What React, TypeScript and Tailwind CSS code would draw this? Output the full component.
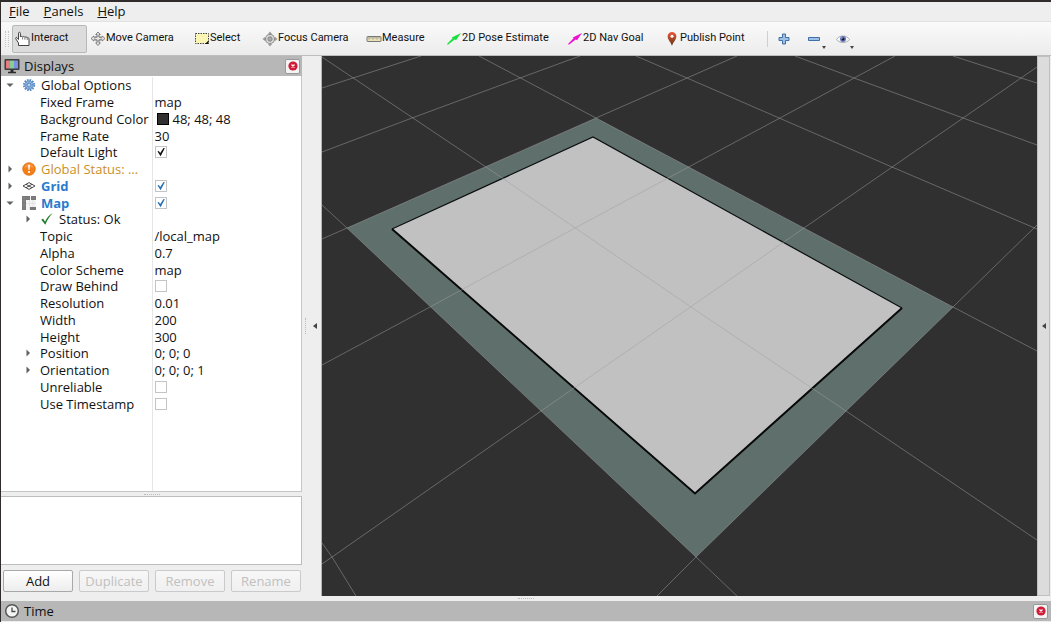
import type { ReactNode } from 'react';

type Row = {
  label: string;
  value?: string;
  checked?: boolean;
  arrow?: 'open' | 'closed';
  icon?: ReactNode;
  depth: 0 | 1;
  tone?: string;
  swatch?: boolean;
  blueCheck?: boolean;
};

function GearIcon() {
  return (
    <svg viewBox="0 0 14 14" className="w-3.5 h-3.5 shrink-0">
      <circle cx="7" cy="7" r="5.2" fill="none" stroke="#5c8dc6" strokeWidth="1.8" strokeDasharray="1.7 1.02" />
      <circle cx="7" cy="7" r="4.3" fill="#8db4e0" stroke="#4f81bd" strokeWidth="0.7" />
      <path d="M7 3v8M3 7h8M4.2 4.2l5.6 5.6M9.8 4.2L4.2 9.8" stroke="#4f81bd" strokeWidth="0.6" />
      <circle cx="7" cy="7" r="1.5" fill="#d7e5f5" stroke="#4f81bd" strokeWidth="0.6" />
    </svg>
  );
}

function WarningIcon() {
  return (
    <svg viewBox="0 0 14 14" className="w-3.5 h-3.5 shrink-0">
      <circle cx="7" cy="7" r="6.3" fill="#f57f17" stroke="#d96a0b" strokeWidth="0.7" />
      <path d="M2 5.5a5.3 5.3 0 0 1 10 0" fill="#fba55c" opacity="0.6" />
      <path d="M6.1 2.8h1.8l-.3 5H6.4z" fill="#fff" />
      <circle cx="7" cy="10" r="1.1" fill="#fff" />
    </svg>
  );
}

function GridIcon() {
  return (
    <svg viewBox="0 0 14 14" className="w-3.5 h-3.5 shrink-0">
      <path d="M1 7l6-3.4L13 7l-6 3.4zM4 5.3l6 3.4M10 5.3L4 8.7" fill="none" stroke="#4a4a4a" strokeWidth="1" />
    </svg>
  );
}

function MapIcon() {
  return (
    <svg viewBox="0 0 14 14" className="w-3.5 h-3.5 shrink-0">
      <path d="M4 4h10v7H8v3H4z" fill="#f4f4f4" />
      <path d="M0 0h8v4H4v10H0zM9 0h5v4H9zM8 11h6v3H8z" fill="#777" />
      <path d="M4 7.5h10M7.5 4v10M11 4v7" stroke="#dcdcdc" strokeWidth="0.6" />
      <path d="M2 0v14M0 2h14M0 5h4M0 9h4" stroke="#9a9a9a" strokeWidth="0.4" />
    </svg>
  );
}

function OkIcon() {
  return (
    <svg viewBox="0 0 14 14" className="w-3.5 h-3.5 shrink-0">
      <path d="M1.2 7.6l2-.9 1.8 3C6.8 6 9 3.200 12.600 1 9.500 4.600 7 8.400 5.300 12.800z" fill="#1f7a26" />
    </svg>
  );
}

function DisplaysIcon() {
  return (
    <svg viewBox="0 0 16 16" className="w-4 h-4 shrink-0">
      <rect x="0.500" y="1" width="15" height="11" rx="1" fill="#3d3d3d" />
      <path d="M2 2.500h4v8H2z" fill="#e47c80" />
      <path d="M6 2.500h4v8H6z" fill="#82d098" />
      <path d="M10 2.500h4v8h-4z" fill="#7c8fe0" />
      <path d="M6.500 12h3v1.800h2.500v1.400H4v-1.400h2.500z" fill="#2b2b2b" />
    </svg>
  );
}

function ClockIcon() {
  return (
    <svg viewBox="0 0 16 16" className="w-4 h-4 shrink-0">
      <circle cx="8" cy="8" r="6.300" fill="#f4f4f4" stroke="#565656" strokeWidth="1.500" />
      <path d="M8 4.500V8.500h3.500" fill="none" stroke="#4a4a4a" strokeWidth="1.300" />
    </svg>
  );
}

function HandIcon() {
  return (
    <svg viewBox="0 0 16 16" className="w-4 h-4 shrink-0">
      <path
        d="M3.500 14.500V12L.8 7.800c-.6-1.200.7-1.900 1.400-1L3.500 8.500V2.200c0-1.300 1.900-1.300 1.900 0V6c.4-.9 2-.9 2.200.1.500-.8 2.200-.7 2.300.3.500-.8 2.200-.6 2.300.5.800-.5 1.800 0 1.800 1v6.600z"
        fill="#fff"
        stroke="#444"
        strokeWidth="1"
      />
      <path d="M7.600 6.500v2M9.900 6.700v2M12.200 7v2" stroke="#444" strokeWidth="0.700" />
    </svg>
  );
}

function MoveIcon() {
  return (
    <svg viewBox="0 0 16 16" className="w-4 h-4 shrink-0">
      <path
        d="M8 1l2.300 2.500H9v2.700h3.200V5L15 7.500 12.200 10V8.800H9v3h1.300L8 14.500l-2.300-2.700H7v-3H3.800V10L1 7.500 3.800 5v1.200H7V3.500H5.700z"
        fill="#e6e6e6"
        stroke="#666"
        strokeWidth="0.800"
      />
      <ellipse cx="8" cy="7.500" rx="3.200" ry="2.500" fill="none" stroke="#888" strokeWidth="0.700" />
    </svg>
  );
}

function SelectIcon() {
  return (
    <svg viewBox="0 0 16 16" className="w-4 h-4 shrink-0">
      <rect x="1.500" y="2.500" width="13" height="10" fill="#fbf6b4" stroke="#444" strokeWidth="1" strokeDasharray="1.500 1" />
      <path d="M14.500 9.500v3.500H11z" fill="#111" />
    </svg>
  );
}

function FocusIcon() {
  return (
    <svg viewBox="0 0 16 16" className="w-4 h-4 shrink-0">
      <path d="M8 .5L10 3H6zM8 15.500L6 13h4zM.5 8L3 6v4zM15.500 8L13 10V6z" fill="#999" />
      <circle cx="8" cy="8" r="4.500" fill="#ddd" stroke="#888" strokeWidth="1.100" />
      <circle cx="8" cy="8" r="2.200" fill="#aaa" stroke="#777" strokeWidth="0.800" />
    </svg>
  );
}

function MeasureIcon() {
  return (
    <svg viewBox="0 0 16 16" className="w-4 h-4 shrink-0">
      <rect x="1" y="5.500" width="14" height="5" rx="0.500" fill="#e9e2b8" stroke="#777" strokeWidth="1" />
      <path d="M3 6v2.500M5 6v1.500M7 6v2.500M9 6v1.500M11 6v2.500M13 6v1.500" stroke="#777" strokeWidth="0.700" />
    </svg>
  );
}

function ArrowIcon({ fill }: { fill: string }) {
  return (
    <svg viewBox="0 0 16 16" className="w-4 h-4 shrink-0">
      <path d="M1 13l5.600-5.800-.8-.7L15 2l-5 7.200-1.300-.7-6.800 5.200z" fill={fill} />
    </svg>
  );
}

function PinIcon() {
  return (
    <svg viewBox="0 0 16 16" className="w-4 h-4 shrink-0">
      <defs>
        <linearGradient id="pin" x1="0" y1="0" x2="0" y2="1">
          <stop offset="0" stopColor="#ee5a3c" />
          <stop offset="1" stopColor="#5b3413" />
        </linearGradient>
      </defs>
      <path d="M8 15C7.200 11.500 3.600 9 3.600 5.300a4.400 4.400 0 0 1 8.800 0C12.400 9 8.800 11.500 8 15z" fill="url(#pin)" />
      <circle cx="8" cy="5.300" r="1.500" fill="#fff" />
    </svg>
  );
}

function PlusIcon() {
  return (
    <svg viewBox="0 0 12 12" className="w-3 h-3">
      <path d="M4.500 1h3v3.500H11v3H7.500V11h-3V7.500H1v-3h3.500z" fill="#9fc0e4" stroke="#3f6fa8" strokeWidth="1" />
    </svg>
  );
}

function MinusIcon() {
  return (
    <svg viewBox="0 0 12 12" className="w-3 h-3">
      <path d="M.5 4.500h11v3H.5z" fill="#9fc0e4" stroke="#3f6fa8" strokeWidth="1" />
    </svg>
  );
}

function EyeIcon() {
  return (
    <svg viewBox="0 0 14 12" className="w-3.5 h-3">
      <path d="M.5 6.500C3 1.800 11 1.800 13.500 6.500 11 10.500 3 10.500.5 6.500z" fill="#f4f4f4" stroke="#a8a8a8" strokeWidth="0.900" />
      <circle cx="7" cy="6" r="3" fill="#6679bd" />
      <circle cx="7" cy="6" r="1.500" fill="#15183a" />
      <circle cx="6" cy="5" r="0.600" fill="#fff" />
    </svg>
  );
}

function CloseButton({ label }: { label: string }) {
  return (
    <button aria-label={label} className="w-[15px] h-[15px] rounded-xs border border-[#999] bg-[#f4f4f4] flex items-center justify-center">
      <svg viewBox="0 0 10 10" className="w-2.5 h-2.5">
        <circle cx="5" cy="5" r="4.600" fill="#cf1b36" />
        <path d="M3.500 3.500l3 3M6.500 3.500l-3 3" stroke="#fff" strokeWidth="1.200" />
      </svg>
    </button>
  );
}

function DropArrow() {
  return (
    <svg viewBox="0 0 4 3" className="w-1 h-[3px] self-end mb-1">
      <path d="M0 0h4L2 3z" fill="#444" />
    </svg>
  );
}

function TreeArrow({ state }: { state?: 'open' | 'closed' }) {
  return (
    <svg viewBox="0 0 8 8" className="w-2 h-2 shrink-0">
      {state === 'open' && <path d="M.5 2.500h7L4 6z" fill="#606060" />}
      {state === 'closed' && <path d="M2.500.5v7L6 4z" fill="#606060" />}
    </svg>
  );
}

function CheckBox({ label, checked, blue }: { label: string; checked: boolean; blue?: boolean }) {
  return (
    <span className="relative block w-3 h-3">
      <input
        type="checkbox"
        aria-label={label}
        defaultChecked={checked}
        className="peer block appearance-none w-3 h-3 border border-[#c4c4c4] bg-white"
      />
      <svg viewBox="0 0 12 12" className="absolute inset-0 w-3 h-3 pointer-events-none opacity-0 peer-checked:opacity-100">
        <path d="M2.500 5.500l1.300-.6 1.400 2.200L8.500 2l1.300.3-4.200 8z" fill={blue ? '#2a6fb5' : '#111'} />
      </svg>
    </span>
  );
}

const BLUE = 'font-bold text-[#2a7bcc]';

const rows: Row[] = [
  { label: 'Global Options', arrow: 'open', icon: <GearIcon />, depth: 0 },
  { label: 'Fixed Frame', value: 'map', depth: 1 },
  { label: 'Background Color', value: '48; 48; 48', depth: 1, swatch: true },
  { label: 'Frame Rate', value: '30', depth: 1 },
  { label: 'Default Light', checked: true, depth: 1 },
  { label: 'Global Status: …', arrow: 'closed', icon: <WarningIcon />, depth: 0, tone: 'text-[#cc8f1f]' },
  { label: 'Grid', checked: true, arrow: 'closed', icon: <GridIcon />, depth: 0, tone: BLUE, blueCheck: true },
  { label: 'Map', checked: true, arrow: 'open', icon: <MapIcon />, depth: 0, tone: BLUE, blueCheck: true },
  { label: 'Status: Ok', arrow: 'closed', icon: <OkIcon />, depth: 1 },
  { label: 'Topic', value: '/local_map', depth: 1 },
  { label: 'Alpha', value: '0.7', depth: 1 },
  { label: 'Color Scheme', value: 'map', depth: 1 },
  { label: 'Draw Behind', checked: false, depth: 1 },
  { label: 'Resolution', value: '0.01', depth: 1 },
  { label: 'Width', value: '200', depth: 1 },
  { label: 'Height', value: '300', depth: 1 },
  { label: 'Position', value: '0; 0; 0', arrow: 'closed', depth: 1 },
  { label: 'Orientation', value: '0; 0; 0; 1', arrow: 'closed', depth: 1 },
  { label: 'Unreliable', checked: false, depth: 1 },
  { label: 'Use Timestamp', checked: false, depth: 1 },
];

const tools = [
  { label: 'Interact', icon: <HandIcon />, size: 'w-[75px]', active: true },
  { label: 'Move Camera', icon: <MoveIcon />, size: 'w-[104px]' },
  { label: 'Select', icon: <SelectIcon />, size: 'w-[68px]' },
  { label: 'Focus Camera', icon: <FocusIcon />, size: 'w-[104px]' },
  { label: 'Measure', icon: <MeasureIcon />, size: 'w-[80px]' },
  { label: '2D Pose Estimate', icon: <ArrowIcon fill="#19e03c" />, size: 'w-[121px]' },
  { label: '2D Nav Goal', icon: <ArrowIcon fill="#ee12d0" />, size: 'w-[97px]' },
  { label: 'Publish Point', icon: <PinIcon />, size: 'w-[104px]' },
];

// Ground plane grid, one line per entry, in window coordinates
const gridLines = [
  '479,56 596,118 953,307 1037,351',
  '322,57 486,167 691,307 846,411 1037,540',
  '322,205 347,228 541,411 696,557 737,596',
  '322,543 332,557 356,596',
  '636,56 687,78 892,167 1037,229',
  '795,56 854,78 963,118 1037,145',
  '953,56 1021,78 1037,83',
  '322,239 347,228 596,118 737,56',
  '322,152 412,118 520,78 580,56',
  '322,88 353,78 421,56',
  '322,365 430,307 575,228 780,118 895,56',
  '322,564 541,411 804,228 1021,78 1037,67',
  '657,596 696,557 953,307 1034,228 1037,225',
];

function Scene() {
  return (
    <svg viewBox="322 56 715 540" preserveAspectRatio="xMidYMid slice" className="block w-full h-full">
      <polygon points="596,118 953,307 696,557 347,228" fill="#5f6f6c" />
      <polygon points="593,137 902,308 695,493 392,229" fill="#c1c1c1" />
      <path d="M392 229L593 137L902 308" fill="none" stroke="#0c0f0f" strokeWidth="1.200" />
      <path d="M902 308L695 493.500L392 229" fill="none" stroke="#080a0a" strokeWidth="2" />
      {gridLines.map((points) => (
        <polyline key={points} points={points} fill="none" stroke="#a0a0a4" strokeOpacity="0.5" />
      ))}
    </svg>
  );
}

function DisplayTree() {
  return (
    <div className="flex-1 min-h-0 overflow-hidden bg-white border-b border-r border-[#c6c6c6] flex flex-col pt-px">
      <table className="w-full h-[335px] shrink-0 table-fixed border-collapse leading-4">
        <tbody>
          {rows.map((row) => (
            <tr key={row.label}>
              <td className="w-[151px] p-0 border-r border-[#e6e6e6]">
                <div className={row.depth ? 'flex items-center h-4 pl-[23px]' : 'flex items-center h-4 pl-[5px]'}>
                  <TreeArrow state={row.arrow} />
                  <span className={row.icon ? 'flex items-center gap-[5px] pl-2' : 'pl-2'}>
                    {row.icon}
                    <span className={`whitespace-nowrap ${row.tone ?? ''}`}>{row.label}</span>
                  </span>
                </div>
              </td>
              <td className="p-0 pl-0.5">
                <div className="flex items-center h-4 gap-1">
                  {row.swatch && <span className="ml-0.5 w-3 h-3 bg-[#303030] border border-black" />}
                  {row.checked !== undefined ? (
                    <CheckBox label={row.label} checked={row.checked} blue={row.blueCheck} />
                  ) : (
                    <span>{row.value}</span>
                  )}
                </div>
              </td>
            </tr>
          ))}
        </tbody>
      </table>
      <div className="flex-1 w-[152px] border-r border-[#e6e6e6]" />
    </div>
  );
}

export default function App() {
  return (
    <div className="h-screen flex flex-col bg-[#eeeeee] border-t-2 border-l border-[#2f2c2b] font-['Open_Sans','Noto_Sans',sans-serif] text-[13px] text-[#111] overflow-hidden">
      {/* Menu bar */}
      <nav className="h-5 shrink-0 flex items-center gap-3.5 pl-2 border-b border-[#e2e2e2]">
        <button><span className="underline">F</span>ile</button>
        <button><span className="underline">P</span>anels</button>
        <button><span className="underline">H</span>elp</button>
      </nav>

      {/* Toolbar */}
      <div className="h-[34px] shrink-0 flex items-center pl-1 bg-linear-to-b from-[#fafafa] to-[#ececec] border-b border-[#bdbdbd] font-['Roboto','Open_Sans',sans-serif] text-[11px]">
        <div className="w-1 h-4 mr-[3px] border-x border-dotted border-[#c4c4c4]" />
        {tools.map((tool) => (
          <button
            key={tool.label}
            className={`h-7 shrink-0 flex items-center pl-0.5 rounded-xs border whitespace-nowrap ${tool.size} ${
              tool.active ? 'bg-[#dcdcdc] border-[#b8b8b8]' : 'border-transparent'
            }`}
          >
            {tool.icon}
            {tool.label}
          </button>
        ))}
        <div className="w-px h-4 ml-[2px] mr-[10px] bg-[#cfcfcf]" />
        <button aria-label="Add tool" className="w-[30px] h-7 flex items-center"><PlusIcon /></button>
        <button aria-label="Remove tool" className="w-[28px] h-7 flex items-center gap-0.5"><MinusIcon /><DropArrow /></button>
        <button aria-label="Tool visibility" className="w-[28px] h-7 flex items-center"><EyeIcon /><DropArrow /></button>
      </div>

      <div className="flex-1 min-h-0 flex">
        {/* Displays panel */}
        <aside className="w-[301px] shrink-0 flex flex-col">
          <header className="h-5 shrink-0 flex items-center gap-1 pl-[3px] pr-0.5 bg-[#b7b7b7]">
            <DisplaysIcon />
            <h2 className="flex-1 pt-px">Displays</h2>
            <CloseButton label="Close Displays" />
          </header>
          <DisplayTree />
          <div className="h-1 shrink-0 flex items-center justify-center">
            <div className="w-4 border-t border-dotted border-[#bbb]" />
          </div>
          <div className="h-[69px] shrink-0 bg-white border border-l-0 border-[#bdbdbd]" />
          <div className="shrink-0 flex gap-1.5 pl-0.5 pr-px pt-[5px] pb-1">
            {['Add', 'Duplicate', 'Remove', 'Rename'].map((name) => (
              <button
                key={name}
                disabled={name !== 'Add'}
                className="flex-1 basis-0 h-[22px] rounded-xs border border-[#a8a8a8] bg-linear-to-b from-white to-[#ededed] leading-5 disabled:border-[#cacaca] disabled:from-[#f7f7f7] disabled:to-[#f0f0f0] disabled:text-[#c0c0c0]"
              >
                {name}
              </button>
            ))}
          </div>
        </aside>

        {/* Splitter with collapse handle */}
        <div className="w-5 shrink-0 pl-[3px] flex items-center gap-1 border-r border-[#b4b4b4]">
          <div className="w-0.5 h-4 border-l border-dotted border-[#bbb]" />
          <button aria-label="Hide left dock" className="w-2 h-8 flex items-center justify-center">
            <svg viewBox="0 0 4 6" className="w-1 h-1.5"><path d="M4 0v6L0 3z" fill="#444" /></svg>
          </button>
        </div>

        <main className="flex-1 min-w-0 bg-[#303030]">
          <Scene />
        </main>

        <button aria-label="Show right dock" className="w-[13px] shrink-0 mr-px flex items-center justify-center bg-[#dcdcdc] border border-[#c0c0c0]">
          <svg viewBox="0 0 4 6" className="w-1 h-1.5"><path d="M4 0v6L0 3z" fill="#444" /></svg>
        </button>
      </div>

      <div className="h-[5px] shrink-0 flex items-center justify-center">
        <div className="w-4 border-t border-dotted border-[#bbb]" />
      </div>

      {/* Time panel */}
      <footer className="h-5 shrink-0 mb-px flex items-center gap-1 pl-[3px] pr-[3px] bg-[#b7b7b7]">
        <ClockIcon />
        <h2 className="flex-1 pt-px">Time</h2>
        <CloseButton label="Close Time" />
      </footer>
    </div>
  );
}
